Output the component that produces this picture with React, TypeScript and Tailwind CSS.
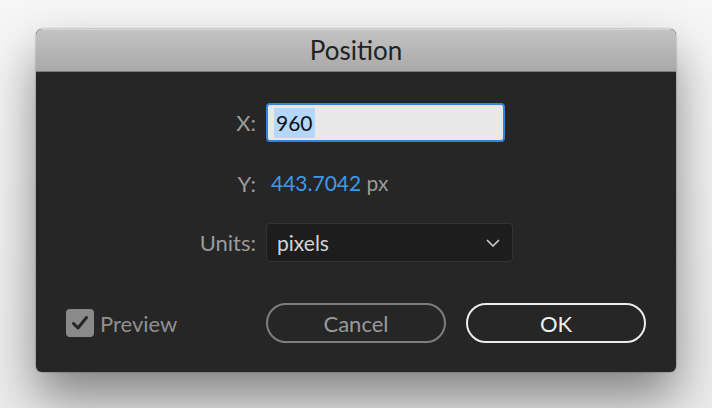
import React from "react";

export default function App() {
  const font = { fontFamily: "Lato, 'Open Sans', sans-serif" };
  return (
    <div
      className="w-[712px] h-[408px] bg-gradient-to-b from-[#f6f6f6] to-[#ececec] pt-[29px] pl-[36px] overflow-hidden"
      style={font}
    >
      <div className="w-[640px] h-[343px] rounded-[6px] bg-[#262626] flex flex-col overflow-hidden shadow-[0_26px_50px_rgba(0,0,0,0.45),0_0_2px_rgba(0,0,0,0.45)]">
        {/* title bar */}
        <div className="h-[43px] flex items-center justify-center bg-gradient-to-b from-[#c3c3c3] to-[#a9a9a9] border-t border-t-[#d6d6d6] border-b border-b-[#7f7f7f]">
          <span className="text-[26px] text-[#222222] leading-none -mt-[1px]">Position</span>
        </div>
        {/* body */}
        <div className="flex flex-col pt-[31px]">
          <div className="flex items-center h-[39px]">
            <div className="w-[220px] text-right text-[22px] text-[#9a9a9a]">X:</div>
            <div className="ml-[10px] w-[239px] h-[39px] rounded-[4px] border-2 border-[#3483dc] bg-[#e8e8e8] flex items-center pl-[6px]">
              <span className="bg-[#b3d7ff] h-[30px] px-[2px] flex items-center text-[21px] text-[#111]">960</span>
            </div>
          </div>
          <div className="flex items-center h-[40px] mt-[21px]">
            <div className="w-[220px] text-right text-[22px] text-[#9a9a9a]">Y:</div>
            <div className="ml-[15px] text-[21px]">
              <span className="text-[#3d9be6]">443.7042</span>
              <span className="text-[#9a9a9a]"> px</span>
            </div>
          </div>
          <div className="flex items-center h-[39px] mt-[20px]">
            <div className="w-[220px] text-right text-[22px] text-[#9a9a9a]">Units:</div>
            <div className="ml-[10px] w-[247px] h-[39px] rounded-[4px] border border-[#333333] bg-[#1d1d1d] flex items-center justify-between pl-[10px] pr-[12px]">
              <span className="text-[21px] text-[#d4d4d4]">pixels</span>
              <svg width="14" height="8" viewBox="0 0 14 8" fill="none">
                <path d="M1 1 L7 7 L13 1" stroke="#cfcfcf" strokeWidth="1.6" />
              </svg>
            </div>
          </div>
          <div className="flex items-center h-[40px] mt-[41px] pl-[30px]">
            <div className="flex items-center w-[200px]">
              <div className="w-[28px] h-[28px] rounded-[4px] bg-[#8a8a8a] flex items-center justify-center">
                <svg width="18" height="16" viewBox="0 0 18 16" fill="none">
                  <path d="M2.5 8.5 L7 13 L15.5 2.5" stroke="#262626" strokeWidth="3" strokeLinecap="round" strokeLinejoin="round" />
                </svg>
              </div>
              <span className="ml-[6px] text-[22px] text-[#909090]">Preview</span>
            </div>
            <button className="w-[180px] h-[40px] rounded-full border-2 border-[#7e7e7e] text-[22px] text-[#9a9a9a] flex items-center justify-center">
              Cancel
            </button>
            <button className="ml-[20px] w-[180px] h-[40px] rounded-full border-2 border-[#ececec] text-[22px] text-[#f0f0f0] flex items-center justify-center">
              OK
            </button>
          </div>
        </div>
      </div>
    </div>
  );
}
